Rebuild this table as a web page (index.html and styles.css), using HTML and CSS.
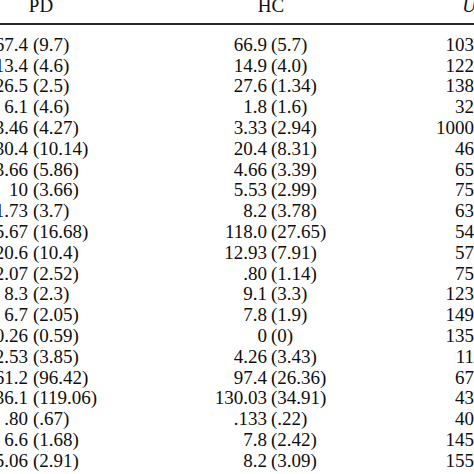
FILE: index.html
```html
<!DOCTYPE html>
<html lang="en">
<head>
<meta charset="utf-8">
<title>PD vs HC</title>
<link rel="stylesheet" href="styles.css">
</head>
<body>
<div class="table">
  <div class="head">
    <div class="h-pd">PD</div>
    <div class="h-hc">HC</div>
    <div class="h-u"><i>U</i></div>
  </div>
  <div class="body">
    <div class="row"><span class="m">67.4</span><span class="s">(9.7)</span><span class="m">66.9</span><span class="s">(5.7)</span><span class="u">103</span></div>
    <div class="row"><span class="m">13.4</span><span class="s">(4.6)</span><span class="m">14.9</span><span class="s">(4.0)</span><span class="u">122</span></div>
    <div class="row"><span class="m">26.5</span><span class="s">(2.5)</span><span class="m">27.6</span><span class="s">(1.34)</span><span class="u">138</span></div>
    <div class="row"><span class="m">6.1</span><span class="s">(4.6)</span><span class="m">1.8</span><span class="s">(1.6)</span><span class="u">32</span></div>
    <div class="row"><span class="m">3.46</span><span class="s">(4.27)</span><span class="m">3.33</span><span class="s">(2.94)</span><span class="u">1000</span></div>
    <div class="row"><span class="m">30.4</span><span class="s">(10.14)</span><span class="m">20.4</span><span class="s">(8.31)</span><span class="u">46</span></div>
    <div class="row"><span class="m">3.66</span><span class="s">(5.86)</span><span class="m">4.66</span><span class="s">(3.39)</span><span class="u">65</span></div>
    <div class="row"><span class="m">10</span><span class="s">(3.66)</span><span class="m">5.53</span><span class="s">(2.99)</span><span class="u">75</span></div>
    <div class="row"><span class="m">1.73</span><span class="s">(3.7)</span><span class="m">8.2</span><span class="s">(3.78)</span><span class="u">63</span></div>
    <div class="row"><span class="m">5.67</span><span class="s">(16.68)</span><span class="m">118.0</span><span class="s">(27.65)</span><span class="u">54</span></div>
    <div class="row"><span class="m">20.6</span><span class="s">(10.4)</span><span class="m">12.93</span><span class="s">(7.91)</span><span class="u">57</span></div>
    <div class="row"><span class="m">2.07</span><span class="s">(2.52)</span><span class="m">.80</span><span class="s">(1.14)</span><span class="u">75</span></div>
    <div class="row"><span class="m">8.3</span><span class="s">(2.3)</span><span class="m">9.1</span><span class="s">(3.3)</span><span class="u">123</span></div>
    <div class="row"><span class="m">6.7</span><span class="s">(2.05)</span><span class="m">7.8</span><span class="s">(1.9)</span><span class="u">149</span></div>
    <div class="row"><span class="m">0.26</span><span class="s">(0.59)</span><span class="m">0</span><span class="s">(0)</span><span class="u">135</span></div>
    <div class="row"><span class="m">2.53</span><span class="s">(3.85)</span><span class="m">4.26</span><span class="s">(3.43)</span><span class="u">11</span></div>
    <div class="row"><span class="m">61.2</span><span class="s">(96.42)</span><span class="m">97.4</span><span class="s">(26.36)</span><span class="u">67</span></div>
    <div class="row"><span class="m">36.1</span><span class="s">(119.06)</span><span class="m">130.03</span><span class="s">(34.91)</span><span class="u">43</span></div>
    <div class="row"><span class="m">.80</span><span class="s">(.67)</span><span class="m">.133</span><span class="s">(.22)</span><span class="u">40</span></div>
    <div class="row"><span class="m">6.6</span><span class="s">(1.68)</span><span class="m">7.8</span><span class="s">(2.42)</span><span class="u">145</span></div>
    <div class="row"><span class="m">5.06</span><span class="s">(2.91)</span><span class="m">8.2</span><span class="s">(3.09)</span><span class="u">155</span></div>
  </div>
</div>
</body>
</html>
```
FILE: styles.css
```css
html, body {
  margin: 0;
  padding: 0;
  background: #fff;
  overflow: hidden;
}
body {
  font-family: "Liberation Serif", "Times New Roman", serif;
  font-size: 19px;
  line-height: 20.8px;
  color: #0e0e0e;
}
.table {
  width: 474px;
}
.head {
  display: grid;
  grid-template-columns: 82px 160px 58px 1fr;
  margin-top: -4px;
  padding-bottom: 6px;
  border-bottom: 2px solid #2a2a2a;
  white-space: nowrap;
}
.h-pd {
  grid-column: 1;
  text-align: center;
}
.h-hc {
  grid-column: 3;
  text-align: center;
}
.h-u {
  grid-column: 4;
  text-align: right;
  margin-right: -2px;
}
.body {
  padding-top: 10px;
}
.row {
  display: grid;
  grid-template-columns: 28px 172px 67px 133px 74px;
  white-space: nowrap;
}
.m {
  display: flex;
  justify-content: flex-end;
}
.s {
  padding-left: 5px;
}
.row .s:nth-child(4) {
  padding-left: 4px;
}
.u {
  text-align: right;
}
```
